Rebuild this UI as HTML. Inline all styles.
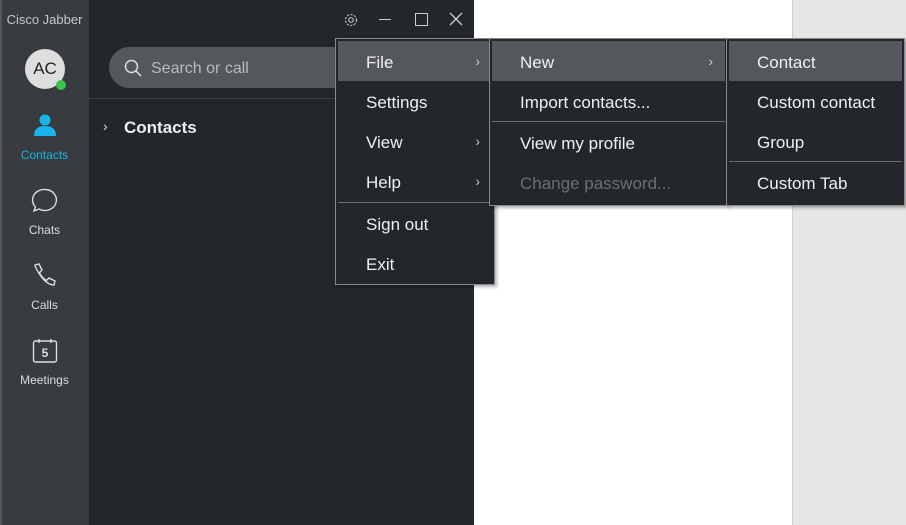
<!DOCTYPE html>
<html><head><style>
*{margin:0;padding:0;box-sizing:border-box}
body{width:906px;height:525px;position:relative;overflow:hidden;background:#fff;font-family:"Liberation Sans",sans-serif;color:#fff}
.a{position:absolute}
.side{left:0;top:0;width:89px;height:525px;background:#383b3f;border-left:2px solid #55585b}
.main{left:89px;top:0;width:385px;height:525px;background:#23262a}
.right{left:792px;top:0;width:114px;height:525px;background:#e6e6e6;border-left:1px solid #cfcfcf}
.lbl{font-size:12px;color:#ddd;width:89px;text-align:center;left:0}
.menu{background:#23262a;border:1px solid #8a8a8a;box-shadow:2px 2px 3px rgba(0,0,0,.3)}
.it{position:absolute;left:2px;right:2px;height:40px;font-size:17px;line-height:43px;color:#f0f0f0}
.hl{background:#54585c}
.sep{position:absolute;left:2px;right:2px;height:1px;background:#6a6d70}
.ar{position:absolute;right:12px;top:0;font-size:14px;color:#ccc;line-height:40px}
</style></head><body>
<div class="a side"></div>
<div class="a lbl" style="top:12px;font-size:13px;color:#c8c8c8">Cisco Jabber</div>
<div class="a" style="left:25px;top:49px;width:40px;height:40px;border-radius:50%;background:#dedede;color:#222;font-size:17px;line-height:40px;text-align:center">AC</div>
<div class="a" style="left:56px;top:80px;width:10px;height:10px;border-radius:50%;background:#3fc24b"></div>
<svg class="a" style="left:33px;top:113px" width="24" height="24"><circle cx="12" cy="7" r="5.5" fill="#1ab4ea"/><path d="M1 23 Q1 13 12 13 Q23 13 23 23Z" fill="#1ab4ea"/></svg>
<div class="a lbl" style="top:148px;color:#1ab4ea">Contacts</div>
<svg class="a" style="left:31px;top:187px" width="28" height="28" fill="none" stroke="#ddd" stroke-width="1.4"><path d="M14 2.5a11.5 10.5 0 1 1-6 19.5l-5 2 1.5-4A11.5 10.5 0 0 1 14 2.5z"/></svg>
<div class="a lbl" style="top:223px">Chats</div>
<svg class="a" style="left:31px;top:262px" width="28" height="28" fill="none" stroke="#ddd" stroke-width="1.4"><path d="M4 3l4-1 3 6-2.5 2.5q2 5 7 8l2.5-2.5 6 3-1 4q-10 0-19-19z"/></svg>
<div class="a lbl" style="top:298px">Calls</div>
<svg class="a" style="left:32px;top:338px" width="26" height="26" fill="none" stroke="#ddd" stroke-width="1.4"><rect x="1.5" y="3" width="23" height="21" rx="2"/><path d="M7 1v4M19 1v4"/><text x="13" y="19" font-size="12" font-weight="bold" fill="#ddd" stroke="none" text-anchor="middle" font-family="Liberation Sans">5</text></svg>
<div class="a lbl" style="top:373px">Meetings</div>

<div class="a main"></div>
<div class="a" style="left:109px;top:47px;width:250px;height:41px;border-radius:21px;background:#54585c"></div>
<svg class="a" style="left:124px;top:59px" width="18" height="18" fill="none" stroke="#ddd" stroke-width="1.5"><circle cx="7.5" cy="7.5" r="6"/><path d="M12 12l5 5"/></svg>
<div class="a" style="left:151px;top:60px;font-size:16px;color:#bbb">Search or call</div>
<div class="a" style="left:89px;top:98px;width:385px;height:1px;background:#3e4145"></div>
<div class="a" style="left:103px;top:118px;font-size:14px;color:#ddd">›</div>
<div class="a" style="left:124px;top:118px;font-size:17px;font-weight:bold;color:#eee">Contacts</div>
<svg class="a" style="left:343px;top:12px" width="16" height="16" fill="none" stroke="#bbb" stroke-width="1.2"><circle cx="8" cy="8" r="2.3"/><circle cx="8" cy="8" r="5.5" stroke-dasharray="2.2 1.4"/></svg>
<div class="a" style="left:379px;top:19px;width:12px;height:1px;background:#ccc"></div>
<div class="a" style="left:415px;top:13px;width:13px;height:13px;border:1px solid #ccc"></div>
<svg class="a" style="left:449px;top:12px" width="14" height="14" stroke="#ccc" stroke-width="1.3"><path d="M1 1l12 12M13 1L1 13"/></svg>

<div class="a right"></div>

<div class="a menu" style="left:335px;top:38px;width:160px;height:247px">
<div class="it hl" style="top:2px;padding-left:28px">File<span class="ar">›</span></div>
<div class="it" style="top:42px;padding-left:28px">Settings</div>
<div class="it" style="top:82px;padding-left:28px">View<span class="ar">›</span></div>
<div class="it" style="top:122px;padding-left:28px">Help<span class="ar">›</span></div>
<div class="sep" style="top:163px"></div>
<div class="it" style="top:164px;padding-left:28px">Sign out</div>
<div class="it" style="top:204px;padding-left:28px">Exit</div>
</div>
<div class="a menu" style="left:489px;top:38px;width:239px;height:168px">
<div class="it hl" style="top:2px;padding-left:28px">New<span class="ar">›</span></div>
<div class="it" style="top:42px;padding-left:28px">Import contacts...</div>
<div class="sep" style="top:82px"></div>
<div class="it" style="top:83px;padding-left:28px">View my profile</div>
<div class="it" style="top:123px;padding-left:28px;color:#6b6e72">Change password...</div>
</div>
<div class="a menu" style="left:726px;top:38px;width:179px;height:168px">
<div class="it hl" style="top:2px;padding-left:28px">Contact</div>
<div class="it" style="top:42px;padding-left:28px">Custom contact</div>
<div class="it" style="top:82px;padding-left:28px">Group</div>
<div class="sep" style="top:122px"></div>
<div class="it" style="top:123px;padding-left:28px">Custom Tab</div>
</div>
</body></html>
